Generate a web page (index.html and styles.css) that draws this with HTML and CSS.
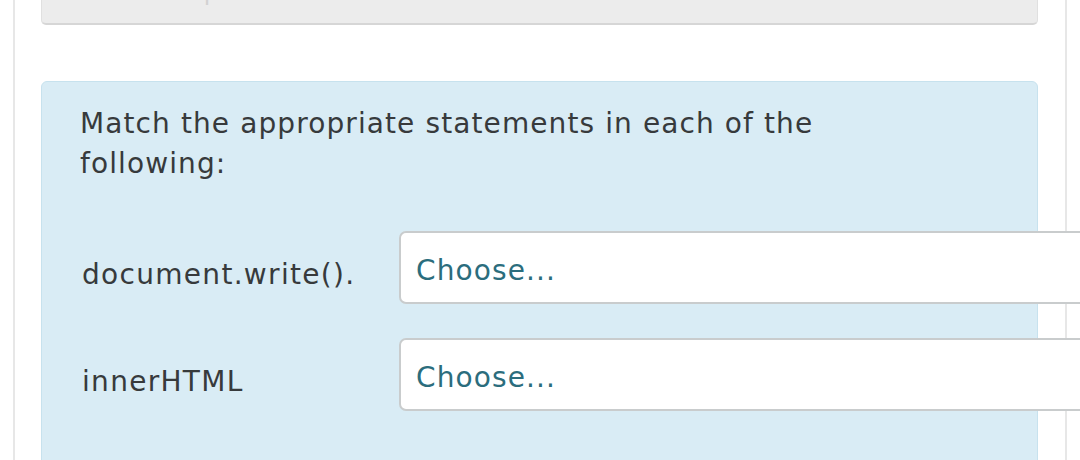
FILE: index.html
```html
<!DOCTYPE html>
<html>
<head>
<meta charset="utf-8">
<link rel="stylesheet" href="styles.css">
</head>
<body>
<div class="page">
  <div class="content">
    <div class="info-box">
      <span class="info-icon">&#9660;</span><span class="info-text">Not complete</span>
    </div>
    <div class="question">
      <p class="qtext">Match the appropriate statements in each of the following:</p>
      <div class="answers">
        <div class="label">document.write().</div>
        <div class="select">Choose...</div>
        <div class="label">innerHTML</div>
        <div class="select">Choose...</div>
      </div>
    </div>
  </div>
</div>
</body>
</html>
```
FILE: styles.css
```css
html, body {
  margin: 0;
  padding: 0;
  background: #ffffff;
  overflow: hidden;
}
body {
  font-family: "DejaVu Sans", Verdana, sans-serif;
  color: #373a3c;
}
.page {
  margin-left: 13px;
  width: 1050px;
  min-height: 460px;
  border-left: 2px solid #e7e7e7;
  border-right: 2px solid #e7e7e7;
}
.content {
  padding: 0 27px 0 26px;
}
.info-box {
  height: 56px;
  margin-top: -34px;
  background: #ececec;
  border: 1px solid #e0e0e0;
  border-bottom: 2px solid #d6d6d6;
  border-radius: 0 0 5px 5px;
  display: flex;
  align-items: flex-end;
  padding-left: 30px;
  font-size: 24px;
  line-height: 28px;
}
.info-icon {
  color: #444;
  font-size: 14px;
  margin-bottom: 17px;
  margin-right: 20px;
}
.info-text {
  color: #d2d2d2;
  margin-bottom: 17px;
}
.question {
  margin-top: 56px;
  background: #d9ecf5;
  border: 1px solid #c7e2ee;
  border-radius: 6px;
  padding: 22px 38px 60px 38px;
  min-height: 400px;
}
.qtext {
  margin: 0;
  font-size: 28px;
  letter-spacing: 1.1px;
  line-height: 40px;
  width: 780px;
}
.answers {
  margin-top: 47px;
  display: grid;
  grid-template-columns: 319px 800px;
  row-gap: 34px;
  align-items: center;
}
.label {
  font-size: 28px;
  letter-spacing: 1.3px;
  padding-left: 2px;
  padding-top: 14px;
}
.select {
  box-sizing: border-box;
  height: 73px;
  background: #ffffff;
  border: 2px solid #c9cccd;
  border-radius: 7px;
  display: flex;
  align-items: center;
  padding-left: 15px;
  padding-top: 6px;
  font-size: 28px;
  letter-spacing: 1.1px;
  color: #2b6d7d;
}
```
